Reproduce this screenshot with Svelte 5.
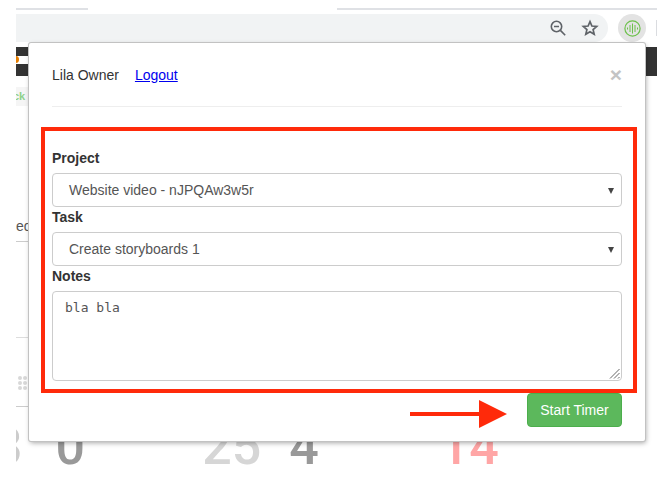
<script>
  const project = 'Website video - nJPQAw3w5r';
  const task = 'Create storyboards 1';
  const notes = 'bla bla';
</script>

<div class="page">
  <div class="tabstrip">
    <span class="tab-a"></span>
    <span class="tab-b"></span>
  </div>
  <div class="chrome">
    <div class="omnibox">
      <svg class="ico" width="18" height="18" viewBox="0 0 18 18" fill="none" stroke="#5f6368" stroke-width="1.6">
        <circle cx="7.5" cy="7.5" r="5.2"/>
        <path d="M5 7.5h5M11.4 11.4l4.8 4.8"/>
      </svg>
      <svg class="ico star" width="18" height="18" viewBox="0 0 18 18" fill="none" stroke="#5f6368" stroke-width="1.7">
        <path d="M9 2.6l1.9 4.4 4.8.4-3.6 3.2 1.1 4.7L9 12.8l-4.200 2.500 1.100-4.700-3.600-3.200 4.800-.4z"/>
      </svg>
    </div>
    <div class="ext">
      <svg width="17" height="17" viewBox="0 0 17 17" fill="none" stroke="#6cc04a">
        <circle cx="8.5" cy="8.5" r="7.6" stroke-width="1.200"/>
        <path d="M3.500 7.500v2M6 5v7M8.500 3.500v10M11 5v7M13.500 7.500v2" stroke-width="1"/>
      </svg>
    </div>
    <span class="sep"></span>
  </div>
  <div class="darkbar"><span class="logo"><span class="dot"></span></span></div>
  <div class="subbar"><span class="ck">ck</span></div>
  <div class="word">ed</div>
  <div class="rule r1"></div>
  <div class="rule r2"></div>
  <div class="grip">
    {#each Array(6) as _}<i></i>{/each}
  </div>
  <div class="rule r3"></div>
  <div class="stats">
    <span class="n three">3</span>
    <span class="n zero">0</span>
    <span class="n light">25</span>
    <span class="n four">4</span>
    <span class="n pink">14</span>
  </div>
</div>

<div class="popup">
  <header>
    <span class="user">Lila Owner</span>
    <a href="#logout">Logout</a>
    <button class="close" aria-label="Close">×</button>
  </header>
  <form class="box">
    <label for="p">Project</label>
    <div class="select" id="p">{project}<span class="caret"></span></div>
    <label for="t">Task</label>
    <div class="select" id="t">{task}<span class="caret"></span></div>
    <label for="n">Notes</label>
    <div class="notes" id="n">
      {notes}
      <svg class="resize" width="11" height="11" viewBox="0 0 11 11" stroke="#666" stroke-width="1"><path d="M1 10.500L10.500 1M5 10.500L10.500 5M9 10.500l1.500-1.500"/></svg>
    </div>
  </form>
  <footer>
    <svg class="arrow" width="97" height="28" viewBox="0 0 97 28">
      <path d="M0 12h69V0l28 14-28 14V16H0z" fill="#ff2a0a"/>
    </svg>
    <button class="start" type="button">Start Timer</button>
  </footer>
</div>

<style>
  :global(body) {
    margin: 0;
    background: #fff;
    font-family: "Liberation Sans", Arial, sans-serif;
  }
  .page {
    position: relative;
    width: 641px;
    height: 489px;
    margin-left: 16px;
    overflow: hidden;
  }
  .tabstrip {
    display: flex;
    height: 14px;
    justify-content: space-between;
  }
  .tab-a, .tab-b {
    height: 2px;
    margin-top: 8px;
    background: #dfe1e5;
  }
  .tab-a { width: 72px; }
  .tab-b { width: 320px; }
  .chrome {
    display: flex;
    align-items: center;
    height: 28px;
  }
  .omnibox {
    width: 592px;
    height: 28px;
    box-sizing: border-box;
    background: #f1f3f4;
    border-radius: 0 14px 14px 0;
    display: flex;
    align-items: center;
    justify-content: flex-end;
    gap: 14px;
    padding-right: 9px;
  }
  .ico { display: block; }
  .ext {
    width: 28px;
    height: 28px;
    margin-left: 10px;
    border-radius: 50%;
    background: #e3e3e3;
    display: flex;
    align-items: center;
    justify-content: center;
  }
  .sep {
    width: 1px;
    height: 16px;
    margin-left: 10px;
    background: #dadce0;
  }
  .darkbar {
    height: 29px;
    margin-top: 5px;
    padding-top: 9px;
    box-sizing: border-box;
    background: #333;
  }
  .logo {
    display: block;
    width: 14px;
    height: 8px;
    background: #fff;
  }
  .dot {
    display: block;
    width: 7px;
    height: 7px;
    margin-left: -4px;
    border-radius: 50%;
    background: #e67e00;
  }
  .subbar {
    width: 20px;
    height: 19px;
    margin-top: 11px;
    overflow: hidden;
    background: #f5f5f5;
    font-size: 11px;
    font-weight: bold;
    line-height: 19px;
    color: #8fd18a;
  }
  .ck { display: block; margin-left: -3px; }
  .word {
    margin-top: 110px;
    height: 20px;
    font-size: 14px;
    line-height: 20px;
    color: #555;
  }
  .rule { width: 40px; height: 1px; background: #ccc; }
  .r1 { margin-top: 5px; }
  .r2 { margin-top: 95px; background: #ddd; }
  .grip {
    display: grid;
    grid-template-columns: 4px 4px;
    grid-auto-rows: 4px;
    gap: 1px;
    margin: 38px 0 0 2px;
    height: 14px;
  }
  .grip i { border-radius: 50%; background: #d8d8d8; }
  .r3 { margin-top: 16px; }
  .stats {
    display: flex;
    margin-top: 10px;
    font-family: Roboto, "Liberation Sans", sans-serif;
    font-weight: 500;
    font-size: 52px;
    line-height: 60px;
  }
  .n { display: block; }
  .three { margin-left: -23px; color: #ccc; }
  .zero { margin-left: 33px; color: #999; }
  .light { margin-left: 117px; color: #d6d6d6; }
  .four { margin-left: 28px; color: #999; }
  .pink { margin-left: 121px; color: #ffa6a6; }

  .popup {
    position: absolute;
    left: 29px;
    top: 43px;
    width: 616px;
    height: 398px;
    box-sizing: border-box;
    padding: 0 23px;
    background: #fff;
    border-radius: 2px;
    box-shadow: 0 0 0 1px #c2c2c2, 1px 2px 5px rgba(0, 0, 0, 0.35);
    font-size: 14px;
    color: #333;
  }
  header {
    display: flex;
    align-items: center;
    height: 63px;
    border-bottom: 1px solid #eee;
    gap: 16px;
  }
  header a { color: #00e; }
  .close {
    margin-left: auto;
    padding: 0;
    border: 0;
    background: none;
    font-family: inherit;
    font-size: 21px;
    font-weight: bold;
    line-height: 1;
    color: #c4c4c4;
  }
  .box {
    width: 596px;
    height: 266px;
    box-sizing: border-box;
    margin: 20px 0 0 -11px;
    padding: 17px 11px 0 7px;
    border: 4px solid #ff2a0a;
  }
  label {
    display: block;
    height: 20px;
    margin-bottom: 5px;
    font-weight: bold;
    line-height: 20px;
    color: #333;
  }
  .select {
    position: relative;
    height: 34px;
    box-sizing: border-box;
    padding-left: 16px;
    border: 1px solid #ccc;
    border-radius: 4px;
    line-height: 32px;
    color: #555;
  }
  .caret {
    position: absolute;
    right: 7px;
    top: 14px;
    border: 3.500px solid transparent;
    border-top: 6px solid #444;
    border-bottom: 0;
  }
  .notes {
    position: relative;
    height: 90px;
    box-sizing: border-box;
    padding: 7px 12px;
    border: 1px solid #ccc;
    border-radius: 4px;
    font-family: "DejaVu Sans Mono", monospace;
    font-size: 13px;
    line-height: 18px;
    color: #555;
  }
  .resize { position: absolute; right: 1px; bottom: 1px; }
  footer {
    display: flex;
    align-items: flex-start;
    justify-content: flex-end;
  }
  .arrow { margin: 7px 20px 0 0; }
  .start {
    width: 95px;
    height: 34px;
    padding: 0;
    border: 1px solid #4cae4c;
    border-radius: 4px;
    background: #5cb85c;
    color: #fff;
    font-family: inherit;
    font-size: 14px;
  }
</style>
